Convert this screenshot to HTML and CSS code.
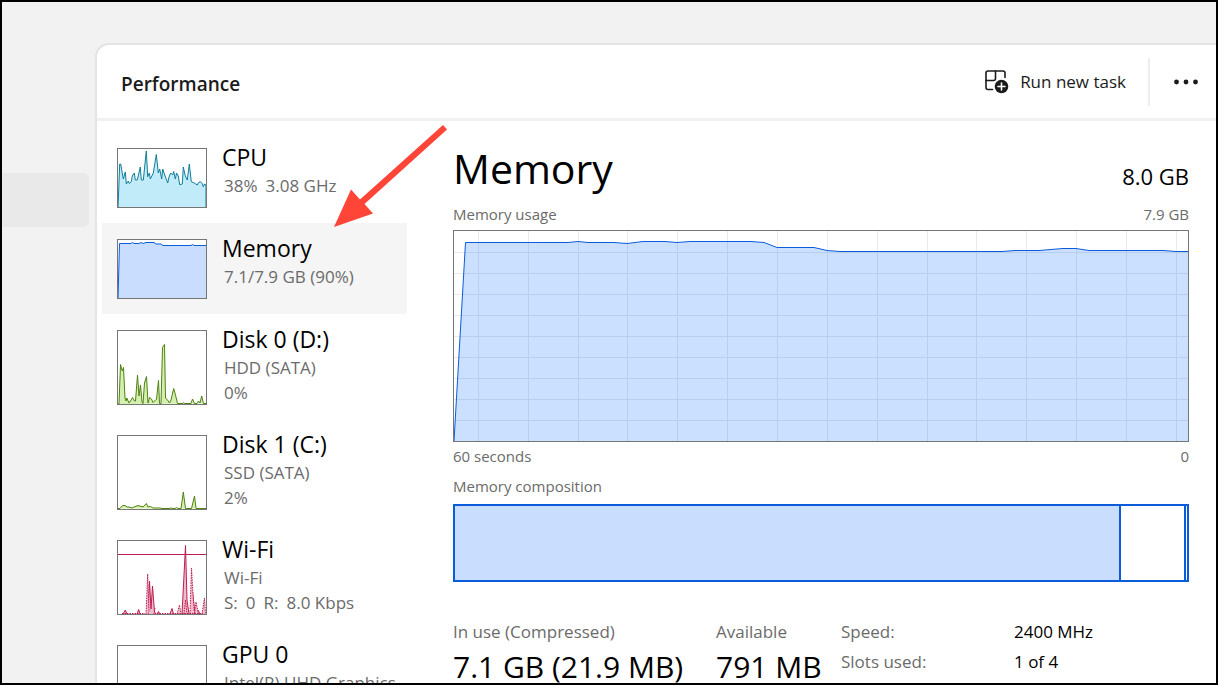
FILE: index.html
```html
<!DOCTYPE html>
<html lang="en">
<head>
<meta charset="utf-8">
<title>Performance</title>
<link rel="stylesheet" href="styles.css">
</head>
<body>
<div class="window">
  <nav class="rail" aria-label="Sections"><button class="rail-item" type="button" aria-label="Performance"></button></nav>
  <main class="panel">
    <header class="toolbar">
      <h1 class="title">Performance</h1>
      <button class="run" type="button">
        <svg class="run-icon" viewBox="0 0 24 24" aria-hidden="true">
          <g fill="none" stroke="#1b1b1b" stroke-width="1.6" stroke-linecap="round">
            <path d="M7.500 19.500H3a2 2 0 0 1-2-2V3a2 2 0 0 1 2-2h15a2 2 0 0 1 2 2v4.500"/>
            <path d="M1 10.500h7.500a2 2 0 0 0 2-2V1M10.500 1v7M1 10.500h8"/>
          </g>
          <circle cx="16.500" cy="16.500" r="6.800" fill="#1b1b1b"/>
          <path d="M16.500 13v7M13 16.500h7" stroke="#fff" stroke-width="1.600" stroke-linecap="round"/>
        </svg>
        <span>Run new task</span>
      </button>
      <button class="more" type="button" aria-label="More options">
        <svg class="more-icon" viewBox="0 0 24 6" aria-hidden="true"><circle cx="2.500" cy="3" r="2.400"/><circle cx="12" cy="3" r="2.400"/><circle cx="21.500" cy="3" r="2.400"/></svg>
      </button>
    </header>
    <div class="content">
      <div class="list">
        <button class="item" type="button">
          <svg class="thumb" viewBox="0 0 90 60" aria-hidden="true">
            <path fill="#c2ebf9" stroke="#117d99" d="M1 60L2.700 16H3.700L6.300 31L8.300 24L9.300 36L11.300 33L12.300 35.500L14.300 33.700L15.300 28L17.300 25L18.300 32H20.300L23.300 19L24.300 32H26.300L29.300 3L30.700 28.700L32.300 25L33.300 31L36.300 25L39.300 6.500L41.300 25L42.700 21L44.700 31L45.700 21L47.700 27L50.700 35L52 29L53.700 25L55.700 27L56.700 23.500L58.300 31L59.500 25L61.300 28L62.700 36.700L65.300 36L66.300 19L68.300 28L70.300 32L72.300 16L74.300 33.700L77.300 35L80.300 37L81.500 34.500L83.300 33.700L85.300 35.500L86.300 38.700L87.500 36L89 37V60Z"/>
            <rect class="edge" x=".5" y=".5" width="89" height="59"/>
          </svg>
          <span class="info"><span class="name">CPU</span><span class="sub gapped"><span>38%</span><span>3.08 GHz</span></span></span>
        </button>
        <button class="item selected" type="button">
          <svg class="thumb" viewBox="0 0 90 60" aria-hidden="true">
            <path fill="#c9deff" stroke="#0b5cdb" d="M1 60L2.500 4.500H14L15.500 3.500L17 4.500H22L24 3.500L26 4.500L29 3.500H37L39 5H44L46 6.500H74L75.500 5.500L77 6.500H89.500V60Z"/>
            <rect class="edge" x=".5" y=".5" width="89" height="59"/>
          </svg>
          <span class="info"><span class="name">Memory</span><span class="sub">7.1/7.9 GB (90%)</span></span>
        </button>
        <button class="item" type="button">
          <svg class="thumb tall" viewBox="0 0 90 75" aria-hidden="true">
            <path fill="#d5efb0" stroke="#4f820f" d="M1 74L2 74L3.500 34.500L5.300 41L6.500 37.500L8 68L9 71L9.800 68L12 73L13.500 71L15.500 67.500L17.500 71H18.500L20.500 45L22 66L23.500 55L25 72L26 73.500L27.500 53L29.500 46.500L31 73L32.500 67.500L34.500 69L36 72.500L38.500 70L39.500 69.500L41.500 50.500L42.500 73.500H44L45.500 17.500L47.500 14.500L48.500 68L50.500 70L52.500 73L54 70L56.700 58.500L58.500 65L60.500 73.500H66L66.700 72.500L67.500 73.500H74L75.500 69L77.500 73.500H80L81.500 71L83 73L84.700 66L86.500 73.500H89"/>
            <rect class="edge" x=".5" y=".5" width="89" height="74"/>
          </svg>
          <span class="info"><span class="name">Disk 0 (D:)</span><span class="sub">HDD (SATA)</span><span class="sub">0%</span></span>
        </button>
        <button class="item" type="button">
          <svg class="thumb tall" viewBox="0 0 90 75" aria-hidden="true">
            <path fill="#d5efb0" stroke="#4f820f" d="M1 73.500H3L5.500 70.500H8L10 72H12L15 73L17 72L21 70.500L26 72L29.300 68.500L31 72L33.500 71.500L36 73H43L45 73.500H52L54 73L56 73.500L58 73.500L59.700 72.500L61 73.500H64L66.300 57L68.500 73.500H74.500L77.500 61L79 73.500H89"/>
            <rect class="edge" x=".5" y=".5" width="89" height="74"/>
          </svg>
          <span class="info"><span class="name">Disk 1 (C:)</span><span class="sub">SSD (SATA)</span><span class="sub">2%</span></span>
        </button>
        <button class="item" type="button">
          <svg class="thumb tall" viewBox="0 0 90 75" aria-hidden="true">
            <g fill="#f0bccb" stroke="#bd1e51">
              <path d="M1 14.500H89M6 74L8.300 70L10 74M20 74L21.700 69.500L23 74M31 74L32.500 41L34 69L35.500 46L37.500 72L39 74M40 74L41.500 71.500L43 74M53 74L55 68.500L56.500 74M65 74L68.500 5.500L70 60L72 74M74 74L75.500 51L78 74M79 74L81 70L83 74"/>
              <path stroke-dasharray="1.500 1" d="M29 74L30.700 34L32 72M37 74L38 68M60 74L62.500 65L64 74M67 74L68.500 60L70 74M73 74L74.500 28L76 55L77.500 74L79 62L81.500 74M85 74L87.500 58L88.500 74M5 73.500H28M40 73.500H86"/>
            </g>
            <rect class="edge" x=".5" y=".5" width="89" height="74"/>
          </svg>
          <span class="info"><span class="name">Wi-Fi</span><span class="sub">Wi-Fi</span><span class="sub gapped"><span>S:</span><span>0</span><span>R:</span><span>8.0 Kbps</span></span></span>
        </button>
        <button class="item" type="button">
          <svg class="thumb tall" viewBox="0 0 90 75" aria-hidden="true"><rect class="edge" x=".5" y=".5" width="89" height="74"/></svg>
          <span class="info"><span class="name">GPU 0</span><span class="sub">Intel(R) UHD Graphics</span></span>
        </button>
      </div>
      <section class="detail">
        <div class="heading"><h2 class="resource">Memory</h2><span class="total">8.0 GB</span></div>
        <div class="caption first"><span>Memory usage</span><span>7.9 GB</span></div>
        <svg class="chart" viewBox="0 0 736 212" preserveAspectRatio="none" role="img" aria-label="Memory usage">
          <path stroke="#e9e9e9" d="M25.500 1V211M75.500 1V211M125.500 1V211M174.500 1V211M224.500 1V211M274.500 1V211M324.500 1V211M374.500 1V211M424.500 1V211M474.500 1V211M523.500 1V211M573.500 1V211M623.500 1V211M673.500 1V211M723.500 1V211M1 22.500H735M1 43.500H735M1 64.500H735M1 85.500H735M1 106.500H735M1 127.500H735M1 148.500H735M1 169.500H735M1 190.500H735"/>
          <path fill="#0a6cff" fill-opacity=".21" d="M1 211L12.500 12.500H115L125 11.500L135 12.500H161L174 13.500L190 11.500H212L224 12.500L237 11.500H298L311 12.500L324 17.500H361L374 20.500L387 21.500H549L562 20.500H586L610 18.500H623L636 20.500H710L723 21.500H735V211Z"/>
          <path fill="none" stroke="#0b5cdb" stroke-width="1" d="M1 211L12.500 12.500H115L125 11.500L135 12.500H161L174 13.500L190 11.500H212L224 12.500L237 11.500H298L311 12.500L324 17.500H361L374 20.500L387 21.500H549L562 20.500H586L610 18.500H623L636 20.500H710L723 21.500H735"/>
          <rect class="edge" x=".5" y=".5" width="735" height="211"/>
        </svg>
        <div class="caption"><span>60 seconds</span><span>0</span></div>
        <div class="caption second"><span>Memory composition</span></div>
        <div class="composition"><span class="used"></span><span class="standby"></span><span class="free"></span></div>
        <div class="stats">
          <dl class="stat"><dt>In use (Compressed)</dt><dd>7.1 GB (21.9 MB)</dd></dl>
          <dl class="stat"><dt>Available</dt><dd>791 MB</dd></dl>
          <dl class="facts"><dt>Speed:</dt><dd>2400 MHz</dd><dt>Slots used:</dt><dd>1 of 4</dd></dl>
        </div>
      </section>
    </div>
  </main>
  <svg class="arrow" viewBox="0 0 114 104" aria-hidden="true"><path fill="#ff4438" d="M109 0L113 4.500L30.500 79L39 88.500L0 102L17 64.500L26 74.500Z"/></svg>
</div>
</body>
</html>
```
FILE: styles.css
```css
* { box-sizing: border-box; }
body { margin: 0; font-family: "Open Sans", "Noto Sans", sans-serif; color: #000; }
button { font: inherit; color: inherit; background: none; border: 0; padding: 0; text-align: left; }
h1, h2, dl, dd { margin: 0; font-weight: 400; }

.window {
  position: relative;
  display: flex;
  height: 100vh;
  overflow: hidden;
  border: 2px solid #000;
  background: #f2f2f2;
}
.rail { flex: 0 0 93px; padding: 171px 6px 0 0; }
.rail-item { display: block; width: 100%; height: 54px; background: #e9e9e9; border-radius: 0 6px 6px 0; }

.panel {
  flex: 1;
  min-width: 0;
  margin-top: 41px;
  background: #fff;
  border: solid #e4e4e4;
  border-width: 2px 0 0 2px;
  border-radius: 14px 0 0 0;
  overflow: hidden;
}
.toolbar {
  display: flex;
  align-items: center;
  height: 76px;
  padding: 0 18px 0 24px;
  border-bottom: 3px solid #f0f0f0;
  color: #1b1b1b;
}
.title { flex: 1; font-size: 19px; font-weight: 600; line-height: 28px; padding-top: 4px; }
.run { display: flex; align-items: center; gap: 11px; font-size: 17px; line-height: 24px; }
.run-icon { width: 24px; height: 24px; }
.more { height: 48px; margin-left: 22px; padding-left: 24px; border-left: 2px solid #ededed; }
.more-icon { display: block; width: 24px; height: 6px; fill: #1b1b1b; }

.content { display: flex; align-items: flex-start; }
.list { flex: 0 0 310px; padding: 11px 0 0 5px; }
.item { display: flex; align-items: flex-start; gap: 15px; width: 100%; padding: 16px 0 15px 15px; white-space: nowrap; }
.selected { background: #f5f5f5; }
.thumb { flex: none; width: 90px; height: 60px; background: #fff; }
.tall { height: 75px; margin-bottom: -1px; }
.edge { fill: none; stroke: #767676; }
.info { display: flex; flex-direction: column; height: 60px; margin-top: -6px; }
.name { font-size: 23px; line-height: 30px; }
.sub { padding-left: 2px; font-size: 17px; line-height: 25px; color: #6b6b6b; }
.name + .sub { padding-top: 1px; }
.gapped { display: flex; gap: 8px; }

.detail { flex: 1; min-width: 0; padding: 19px 27px 0 46px; }
.heading { display: flex; justify-content: space-between; align-items: flex-end; height: 60px; }
.resource { font-size: 41px; line-height: 56px; padding-bottom: 4px; }
.total { font-size: 22px; line-height: 30px; padding-bottom: 9px; }
.caption { display: flex; justify-content: space-between; height: 28px; font-size: 15px; line-height: 28px; color: #6b6b6b; }
.first { height: 30px; }
.chart { display: block; width: 100%; height: 212px; }
.second { height: 34px; line-height: 32px; }
.composition { display: flex; height: 78px; border: 2px solid #0b5cdb; }
.used { flex: 664; background: #c9deff; border-right: 2px solid #0b5cdb; }
.standby { flex: 63; border-right: 2px solid #0b5cdb; }
.free { flex: 1; }

.stats { display: flex; padding-top: 35px; font-size: 17px; line-height: 30px; white-space: nowrap; }
.stats dt { color: #6b6b6b; }
.stat { flex: 0 0 263px; }
.stat + .stat { flex-basis: 125px; }
.stat dd { font-size: 30px; line-height: 40px; }
.facts { display: grid; grid-template-columns: 173px auto; align-content: start; }

.arrow { position: absolute; left: 332px; top: 123px; width: 114px; height: 104px; }
```
